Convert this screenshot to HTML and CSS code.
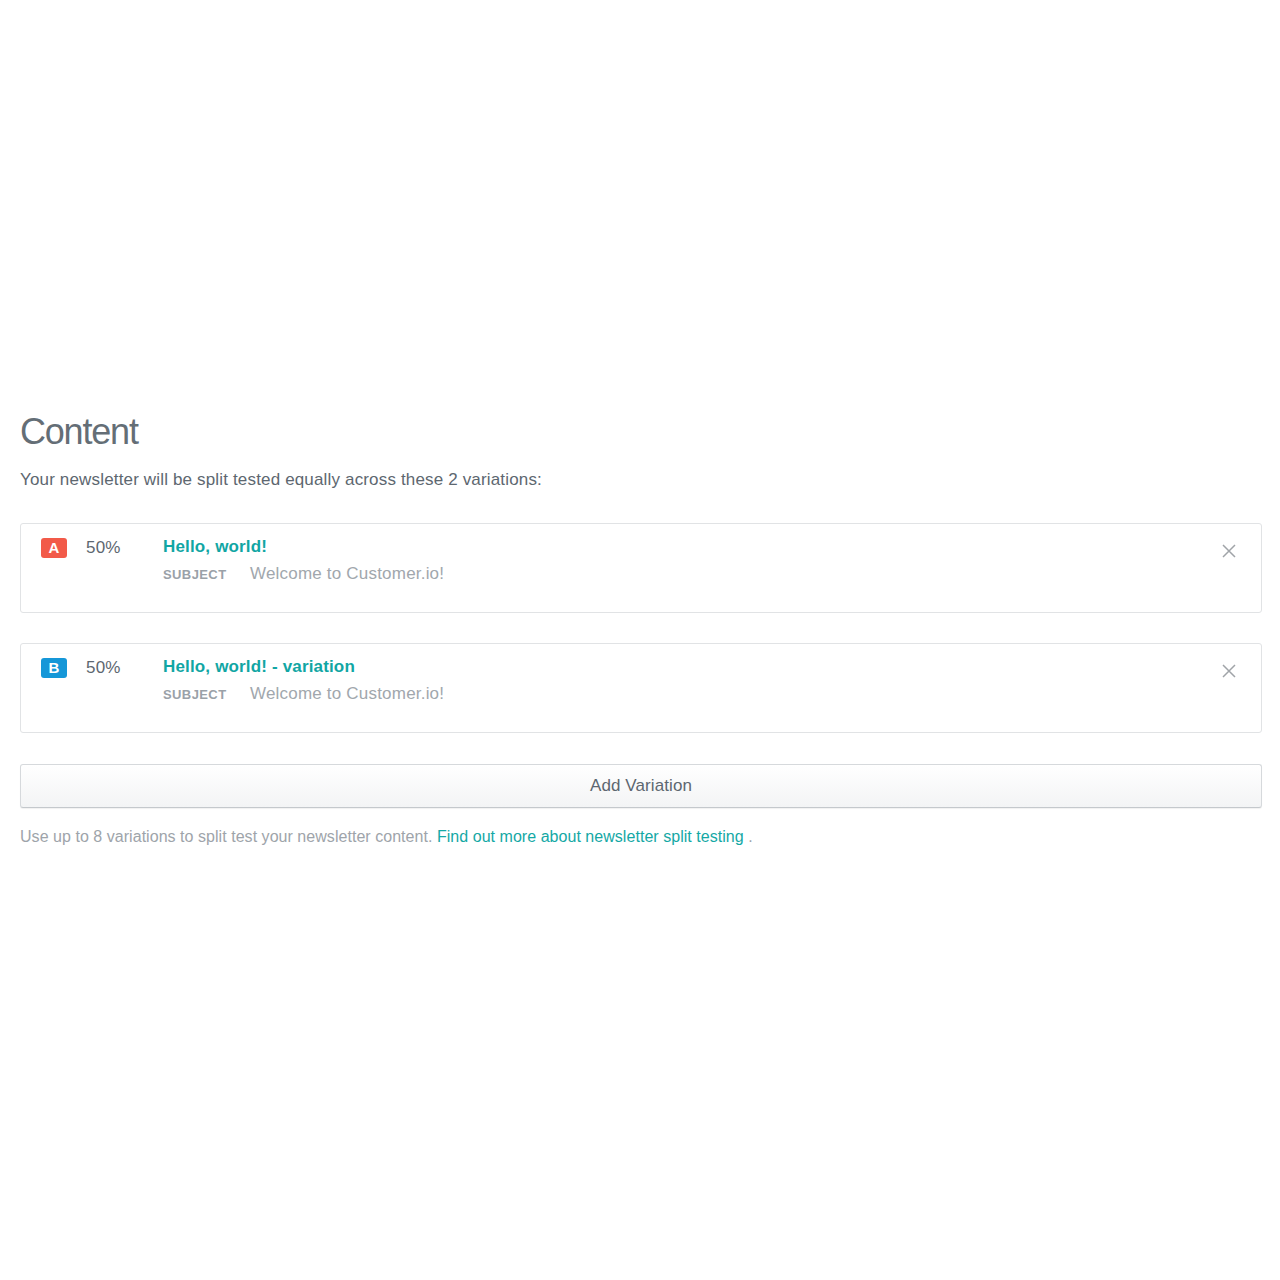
FILE: index.html
```html
<!DOCTYPE html>
<html>
<head>
<meta charset="utf-8">
<link rel="stylesheet" href="styles.css">
</head>
<body>
<main class="page">
  <h1 class="title">Content</h1>
  <p class="intro">Your newsletter will be split tested equally across these 2 variations:</p>

  <div class="card">
    <span class="badge badge-a">A</span>
    <span class="pct">50%</span>
    <div class="info">
      <a class="name" href="#">Hello, world!</a>
      <div class="subject"><span class="label">SUBJECT</span><span class="value">Welcome to Customer.io!</span></div>
    </div>
    <button class="close" aria-label="Remove">
      <svg width="14" height="14" viewBox="0 0 14 14"><path d="M1 1 L13 13 M13 1 L1 13" stroke="#a0a4a8" stroke-width="1.5" fill="none"/></svg>
    </button>
  </div>

  <div class="card">
    <span class="badge badge-b">B</span>
    <span class="pct">50%</span>
    <div class="info">
      <a class="name" href="#">Hello, world! - variation</a>
      <div class="subject"><span class="label">SUBJECT</span><span class="value">Welcome to Customer.io!</span></div>
    </div>
    <button class="close" aria-label="Remove">
      <svg width="14" height="14" viewBox="0 0 14 14"><path d="M1 1 L13 13 M13 1 L1 13" stroke="#a0a4a8" stroke-width="1.5" fill="none"/></svg>
    </button>
  </div>

  <button class="add">Add Variation</button>

  <p class="help">Use up to 8 variations to split test your newsletter content. <a href="#">Find out more about newsletter split testing</a> .</p>
</main>
</body>
</html>
```

FILE: styles.css
```css
html, body {
  margin: 0;
  padding: 0;
  background: #fff;
}
body {
  font-family: "Liberation Sans", Arial, sans-serif;
  color: #5d6770;
}
.page {
  padding: 410px 18px 0 20px;
}
.title {
  margin: 0;
  font-size: 36px;
  line-height: 44px;
  font-weight: normal;
  color: #646e76;
  letter-spacing: -1.2px;
}
.intro {
  margin: 14px 0 0;
  font-size: 17px;
  line-height: 24px;
  color: #5d6770;
  letter-spacing: 0.16px;
}
.card {
  margin-top: 31px;
  border: 1px solid #e1e3e5;
  border-radius: 3px;
  height: 88px;
  box-sizing: content-box;
  display: flex;
  align-items: flex-start;
  padding: 0 0 0 20px;
  position: relative;
}
.card + .card {
  margin-top: 30px;
}
.badge {
  margin-top: 14px;
  width: 26px;
  height: 20px;
  border-radius: 3px;
  color: #fff;
  font-weight: bold;
  font-size: 15px;
  line-height: 20px;
  text-align: center;
  flex: none;
}
.badge-a { background: #f25a49; }
.badge-b { background: #1597d8; }
.pct {
  margin: 13px 0 0 19px;
  width: 77px;
  font-size: 17px;
  line-height: 22px;
  color: #5d6770;
  flex: none;
  letter-spacing: 0.2px;
}
.info {
  margin-top: 12px;
  flex: 1;
}
.name {
  display: block;
  font-size: 17px;
  line-height: 22px;
  font-weight: bold;
  color: #11a6a4;
  text-decoration: none;
  letter-spacing: 0.16px;
}
.subject {
  margin-top: 5px;
  display: flex;
  align-items: baseline;
}
.label {
  width: 87px;
  font-size: 13px;
  font-weight: bold;
  color: #9aa1a8;
  letter-spacing: 0.4px;
}
.value {
  font-size: 17px;
  line-height: 22px;
  color: #a1a7ad;
  letter-spacing: 0.2px;
}
.close {
  margin: 20px 25px 0 0;
  padding: 0;
  border: 0;
  background: none;
  width: 14px;
  height: 14px;
  cursor: pointer;
  display: flex;
}
.add {
  display: block;
  width: 100%;
  margin-top: 31px;
  height: 44px;
  border: 1px solid #d6d9dc;
  border-bottom-color: #c4c8cc;
  border-radius: 3px;
  background: linear-gradient(#ffffff, #f3f4f5);
  font-family: "Liberation Sans", Arial, sans-serif;
  font-size: 17px;
  color: #5d6770;
  box-shadow: 0 1px 1px rgba(0,0,0,0.06);
  letter-spacing: 0.1px;
}
.help {
  margin: 18px 0 0;
  font-size: 16px;
  line-height: 22px;
  color: #9ea4aa;
  letter-spacing: 0.04px;
}
.help a {
  color: #14a8a5;
  text-decoration: none;
}
```
